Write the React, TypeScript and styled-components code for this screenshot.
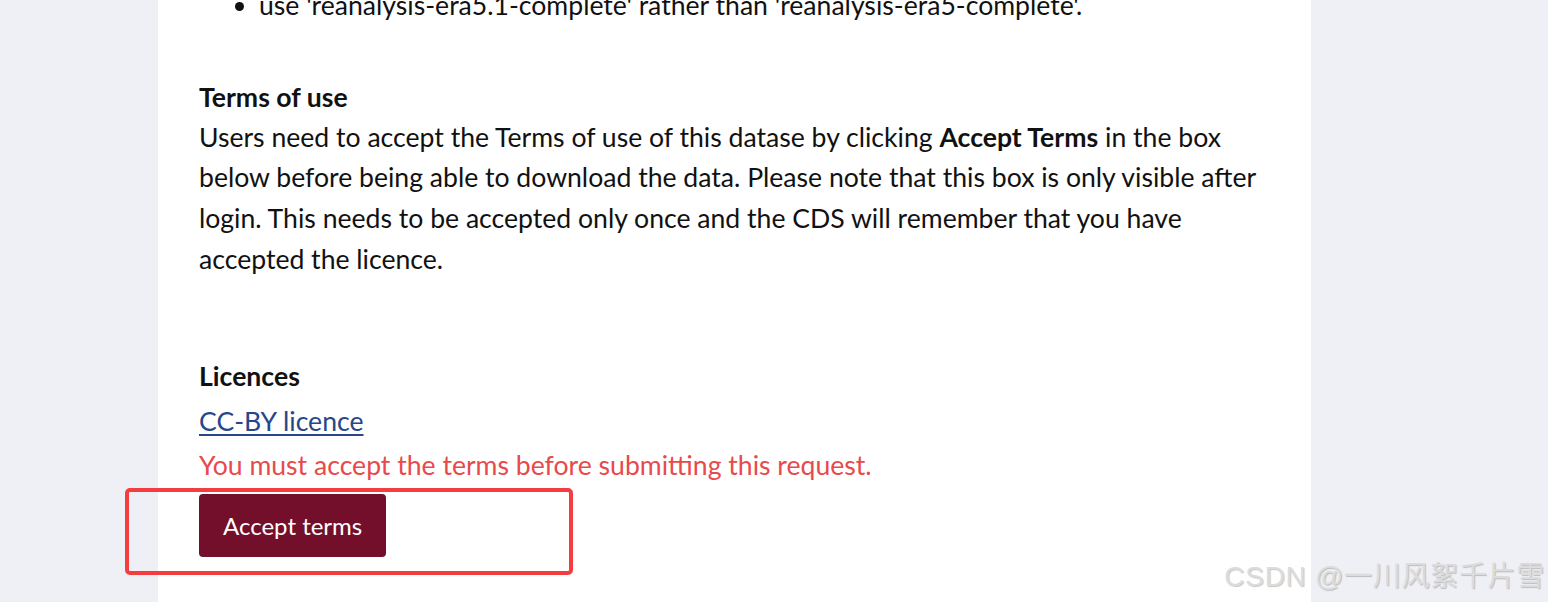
import styled, { createGlobalStyle } from "styled-components";

const Global = createGlobalStyle`
	html, body {
		margin: 0;
		padding: 0;
		background: #eff0f5;
		overflow: hidden;
	}
	body {
		font-family: Lato, "Noto Sans", sans-serif;
		color: #111111;
	}
`;

const Page = styled.div`
	position: relative;
	display: flex;
	width: 1548px;
	height: 602px;
	overflow: hidden;
	background: #eff0f5;
`;

const Panel = styled.main`
	display: flow-root;
	margin-left: 158px;
	width: 1153px;
	background: #ffffff;
	padding: 0 0 0 41px;
	box-sizing: border-box;
	font-size: 26.6px;
	line-height: 40.7px;
`;

const BulletList = styled.ul`
	margin: -15px 0 0 0;
	padding-left: 60px;
	li {
		list-style: disc;
	}
`;

const Section = styled.section<{ gap: number }>`
	margin-top: ${p => p.gap}px;
`;

const Heading = styled.h3`
	margin: 0;
	font-size: 26.6px;
	font-weight: 700;
	line-height: 40px;
`;

const Text = styled.p`
	margin: 0;
	white-space: nowrap;
`;

const Link = styled.a`
	display: block;
	color: #27478a;
	text-decoration: underline;
	text-underline-offset: 3px;
	text-decoration-thickness: 1.5px;
	line-height: 44px;
	margin-top: 3px;
`;

const ErrorText = styled.p`
	margin: 0;
	color: #e84a4c;
	line-height: 44px;
`;

const Button = styled.button`
	margin-top: 7px;
	height: 63px;
	padding: 0 24px;
	border: none;
	border-radius: 4px;
	background: #730f2b;
	color: #ffffff;
	font-family: Lato, "Noto Sans", sans-serif;
	font-size: 24px;
	cursor: pointer;
`;

const Highlight = styled.div`
	position: absolute;
	left: 125px;
	top: 488px;
	width: 448px;
	height: 87px;
	border: 4px solid #f53d3f;
	border-radius: 5px;
	box-sizing: border-box;
	pointer-events: none;
`;

const Watermark = styled.div`
	position: absolute;
	right: 3px;
	top: 554px;
	font-family: "Liberation Sans", "Noto Sans CJK SC", sans-serif;
	font-size: 28px;
	color: #dcdcdc;
	text-shadow: 1px 1px 1px rgba(0, 0, 0, 0.22);
	letter-spacing: 0.7px;
	white-space: nowrap;
`;

export default function App() {
	return (
		<Page>
			<Global />
			<Panel>
				<BulletList>
					<li>use 'reanalysis-era5.1-complete' rather than 'reanalysis-era5-complete'.</li>
				</BulletList>
				<Section gap={51}>
					<Heading>Terms of use</Heading>
					<Text>
						Users need to accept the Terms of use of this datase by clicking <b>Accept Terms</b> in the box
						<br />
						below before being able to download the data. Please note that this box is only visible after
						<br />
						login. This needs to be accepted only once and the CDS will remember that you have
						<br />
						accepted the licence.
					</Text>
				</Section>
				<Section gap={76}>
					<Heading>Licences</Heading>
					<Link href="#">CC-BY licence</Link>
					<ErrorText>You must accept the terms before submitting this request.</ErrorText>
					<Button>Accept terms</Button>
				</Section>
			</Panel>
			<Highlight />
			<Watermark>CSDN @一川风絮千片雪</Watermark>
		</Page>
	);
}
